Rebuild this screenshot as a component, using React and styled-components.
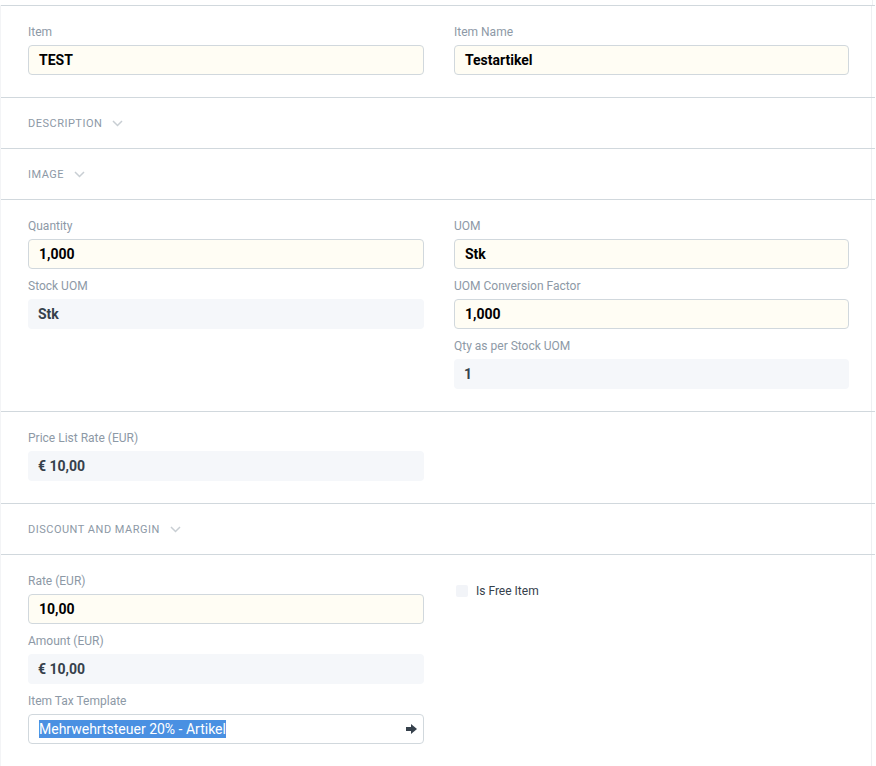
import React from 'react';
import styled, { createGlobalStyle } from 'styled-components';

const GlobalStyle = createGlobalStyle`
    body {
        margin: 0;
        background: #ffffff;
        font-family: Roboto, "Liberation Sans", Arial, sans-serif;
        color: #36414c;
    }
`

function Chevron() {
    return (
        <svg width="11" height="7" viewBox="0 0 11 7">
            <polyline points="1,1 5.5,5.5 10,1" fill="none" stroke="#c8ced3" strokeWidth="1.5" />
        </svg>
    )
}

function ArrowIcon() {
    return (
        <svg width="11" height="10" viewBox="0 0 11 10">
            <rect x="0" y="3" width="6" height="4" fill="#36414c" />
            <polygon points="5,0 11,5 5,10" fill="#36414c" />
        </svg>
    )
}

function Field({ label, value, kind }) {
    return (
        <FieldWrap>
            <Label>{label}</Label>
            {kind === 'readonly' && <ReadOnly>{value}</ReadOnly>}
            {kind === 'link' && (
                <Control $bg="#ffffff">
                    <Selected>{value}</Selected>
                    <ArrowIcon />
                </Control>
            )}
            {!kind && <Control $bg="#fffdf4" $bold>{value}</Control>}
        </FieldWrap>
    )
}

export default function App() {
    return (
        <>
            <GlobalStyle />
            <Top />
            <Card>
                <Section>
                    <Column>
                        <Field label="Item" value="TEST" />
                    </Column>
                    <Column>
                        <Field label="Item Name" value="Testartikel" />
                    </Column>
                </Section>
                <Collapsed>Description <Chevron /></Collapsed>
                <Collapsed>Image <Chevron /></Collapsed>
                <Section>
                    <Column>
                        <Field label="Quantity" value="1,000" />
                        <Field label="Stock UOM" value="Stk" kind="readonly" />
                    </Column>
                    <Column>
                        <Field label="UOM" value="Stk" />
                        <Field label="UOM Conversion Factor" value="1,000" />
                        <Field label="Qty as per Stock UOM" value="1" kind="readonly" />
                    </Column>
                </Section>
                <Section>
                    <Column>
                        <Field label="Price List Rate (EUR)" value="€ 10,00" kind="readonly" />
                    </Column>
                    <Column />
                </Section>
                <Collapsed>Discount and Margin <Chevron /></Collapsed>
                <Section>
                    <Column>
                        <Field label="Rate (EUR)" value="10,00" />
                        <Field label="Amount (EUR)" value="€ 10,00" kind="readonly" />
                        <Field label="Item Tax Template" value="Mehrwehrtsteuer 20% - Artikel" kind="link" />
                    </Column>
                    <Column>
                        <CheckRow>
                            <CheckBox />
                            <CheckLabel>Is Free Item</CheckLabel>
                        </CheckRow>
                    </Column>
                </Section>
            </Card>
        </>
    )
}

const Top = styled.div`
    height: 5px;
    border-right: 1px solid #eef0f2;
    width: 872px;
`

const Card = styled.div`
    width: 872px;
    border-right: 1px solid #eef0f2;
    border-left: 1px solid #f3f4f6;
    border-bottom: 1px solid #eef0f2;
    box-sizing: border-box;
`

const Section = styled.div`
    display: grid;
    grid-template-columns: 396px 395px;
    column-gap: 30px;
    padding: 17px 0 14px 27px;
    border-top: 1px solid #d1d8dd;
    margin-right: -4px;
`

const Column = styled.div`
    display: flex;
    flex-direction: column;
`

const Collapsed = styled.div`
    display: flex;
    align-items: center;
    gap: 10px;
    height: 50px;
    padding-left: 27px;
    border-top: 1px solid #d1d8dd;
    margin-right: -4px;
    font-size: 11px;
    letter-spacing: 0.5px;
    text-transform: uppercase;
    color: #8d99a6;
`

const FieldWrap = styled.div`
    margin-bottom: 8px;
`

const Label = styled.div`
    font-size: 12px;
    line-height: 18px;
    margin-bottom: 4px;
    color: #8d99a6;
`

const Control = styled.div`
    display: flex;
    align-items: center;
    justify-content: space-between;
    height: 30px;
    box-sizing: border-box;
    padding: 0 6px 0 10px;
    background: ${p => p.$bg};
    border: 1px solid #d1d8dd;
    border-radius: 4px;
    font-size: 14px;
    font-weight: ${p => (p.$bold ? 700 : 400)};
    color: #000000;
`

const ReadOnly = styled.div`
    display: flex;
    align-items: center;
    height: 30px;
    box-sizing: border-box;
    padding: 0 10px;
    background: #f5f7fa;
    border-radius: 4px;
    font-size: 14px;
    font-weight: 700;
    color: #36414c;
`

const Selected = styled.span`
    background: #4a90e2;
    color: #ffffff;
    line-height: 18px;
`

const CheckRow = styled.div`
    display: flex;
    align-items: center;
    gap: 8px;
    margin-top: 12px;
    padding-left: 2px;
`

const CheckBox = styled.div`
    width: 12px;
    height: 12px;
    border-radius: 2px;
    background: #f2f4f8;
`

const CheckLabel = styled.span`
    font-size: 12px;
    color: #36414c;
`
